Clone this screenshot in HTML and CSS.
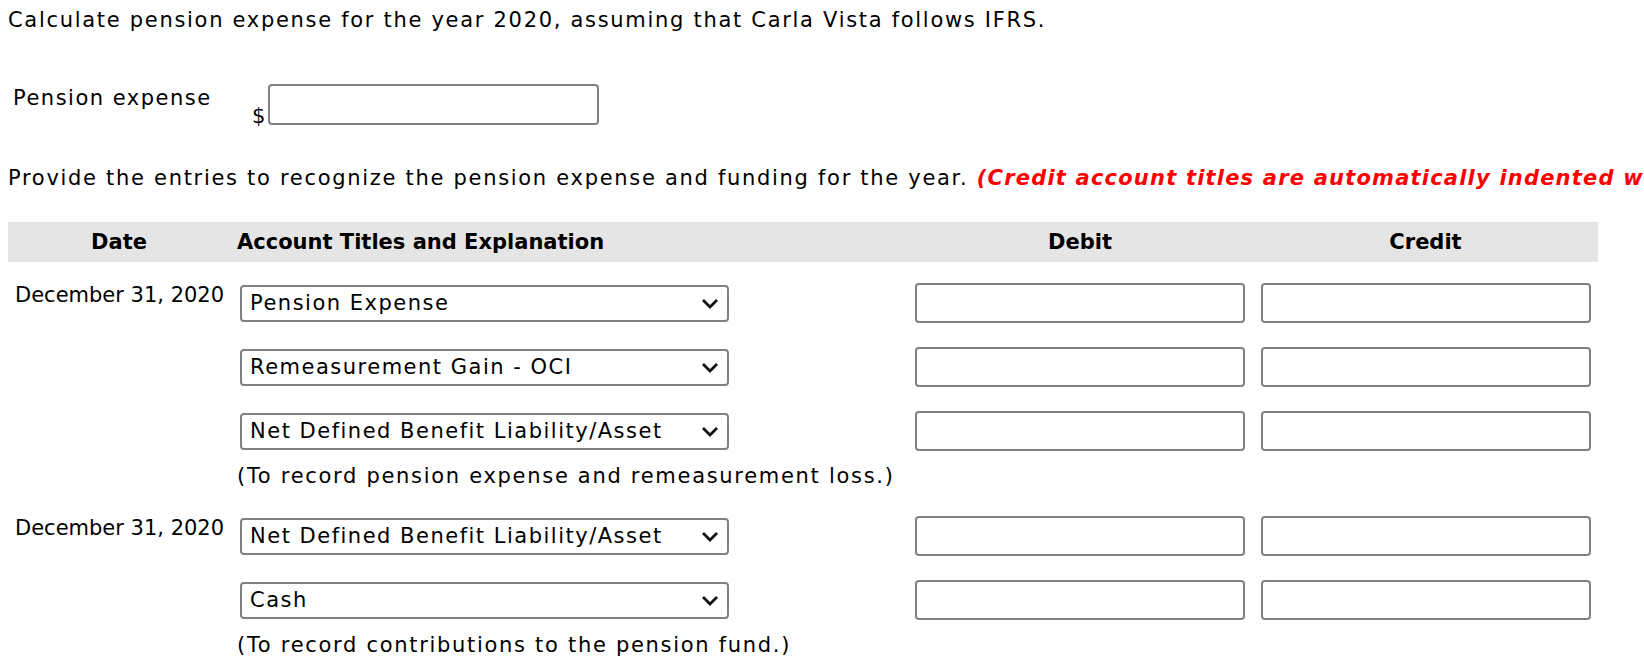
FILE: index.html
```html
<!DOCTYPE html>
<html lang="en">
<head>
    <meta charset="UTF-8">
    <meta name="viewport" content="width=device-width, initial-scale=1.0">
    <title>Pension Expense</title>
    <link rel="stylesheet" href="styles.css">
</head>
<body>
    <p class="question">Calculate pension expense for the year 2020, assuming that Carla Vista follows IFRS.</p>

    <div class="answer-row">
        <label class="answer-label" for="pension">Pension expense</label>
        <span class="currency">$</span>
        <input type="text" id="pension" class="answer-input">
    </div>

    <p class="instruction">Provide the entries to recognize the pension expense and funding for the year. <span class="warning">(Credit account titles are automatically indented when the amount is entered. Do not indent manually.)</span></p>

    <div class="journal">
        <div class="journal-head">
            <div class="col-date">Date</div>
            <div class="col-account">Account Titles and Explanation</div>
            <div class="col-amount">Debit</div>
            <div class="col-amount">Credit</div>
        </div>

        <div class="entry">
            <div class="line first">
                <div class="date">December 31, 2020</div>
                <div class="select-wrap">
                    <select class="account">
                        <option>Pension Expense</option>
                    </select>
                    <svg class="chevron" viewBox="0 0 18 11" width="18" height="11"><polyline points="2,2 9,9 16,2" fill="none" stroke="#111" stroke-width="2.8"/></svg>
                </div>
                <div class="amount"><input type="text"></div>
                <div class="amount"><input type="text"></div>
            </div>
            <div class="line">
                <div class="date"></div>
                <div class="select-wrap">
                    <select class="account">
                        <option>Remeasurement Gain - OCI</option>
                    </select>
                    <svg class="chevron" viewBox="0 0 18 11" width="18" height="11"><polyline points="2,2 9,9 16,2" fill="none" stroke="#111" stroke-width="2.8"/></svg>
                </div>
                <div class="amount"><input type="text"></div>
                <div class="amount"><input type="text"></div>
            </div>
            <div class="line">
                <div class="date"></div>
                <div class="select-wrap">
                    <select class="account">
                        <option>Net Defined Benefit Liability/Asset</option>
                    </select>
                    <svg class="chevron" viewBox="0 0 18 11" width="18" height="11"><polyline points="2,2 9,9 16,2" fill="none" stroke="#111" stroke-width="2.8"/></svg>
                </div>
                <div class="amount"><input type="text"></div>
                <div class="amount"><input type="text"></div>
            </div>
            <p class="note">(To record pension expense and remeasurement loss.)</p>
        </div>

        <div class="entry">
            <div class="line">
                <div class="date">December 31, 2020</div>
                <div class="select-wrap">
                    <select class="account">
                        <option>Net Defined Benefit Liability/Asset</option>
                    </select>
                    <svg class="chevron" viewBox="0 0 18 11" width="18" height="11"><polyline points="2,2 9,9 16,2" fill="none" stroke="#111" stroke-width="2.8"/></svg>
                </div>
                <div class="amount"><input type="text"></div>
                <div class="amount"><input type="text"></div>
            </div>
            <div class="line">
                <div class="date"></div>
                <div class="select-wrap">
                    <select class="account">
                        <option>Cash</option>
                    </select>
                    <svg class="chevron" viewBox="0 0 18 11" width="18" height="11"><polyline points="2,2 9,9 16,2" fill="none" stroke="#111" stroke-width="2.8"/></svg>
                </div>
                <div class="amount"><input type="text"></div>
                <div class="amount"><input type="text"></div>
            </div>
            <p class="note">(To record contributions to the pension fund.)</p>
        </div>
    </div>
</body>
</html>
```

FILE: styles.css
```css
html {
    overflow: hidden;
}
body {
    font-family: "DejaVu Sans", Verdana, sans-serif;
    font-size: 21px;
    line-height: 24px;
    letter-spacing: 1.7px;
    color: #000;
    margin: 0;
    padding: 8px;
    background-color: #fff;
}
.question {
    margin: 0;
}
.answer-row {
    display: flex;
    margin-top: 52px;
    height: 41px;
}
.answer-label {
    width: 239px;
    padding-left: 5px;
    padding-top: 2px;
    letter-spacing: 1.5px;
}
.currency {
    align-self: flex-end;
    margin-bottom: -3px;
    width: 16px;
    letter-spacing: 0;
}
.answer-input {
    width: 331px;
    height: 41px;
    box-sizing: border-box;
    border: 2px solid #808080;
    border-radius: 4px;
    margin: 0;
}
.instruction {
    margin: 41px 0 0;
    white-space: nowrap;
}
.warning {
    color: #ff0000;
    font-weight: bold;
    font-style: italic;
    letter-spacing: 1.2px;
}
.journal {
    width: 1590px;
    margin-top: 32px;
}
.journal-head, .line {
    display: grid;
    grid-template-columns: 222px 677px 346px 345px;
}
.journal-head {
    height: 40px;
    align-items: center;
    background-color: #e5e5e5;
    font-weight: bold;
    letter-spacing: 0;
}
.col-date, .col-amount {
    text-align: center;
}
.col-account {
    padding-left: 7px;
}
.entry {
    display: flow-root;
}
.line {
    height: 40px;
    margin-top: 24px;
    align-items: center;
}
.line.first {
    margin-top: 21px;
}
.date {
    align-self: start;
    padding-left: 7px;
    letter-spacing: 0;
    white-space: nowrap;
}
.select-wrap {
    position: relative;
    margin-left: 10px;
    width: 489px;
    height: 37px;
}
.account {
    appearance: none;
    -webkit-appearance: none;
    width: 100%;
    height: 37px;
    box-sizing: border-box;
    border: 2px solid #808080;
    border-radius: 4px;
    background-color: #fff;
    padding: 0 0 0 8px;
    font-family: "DejaVu Sans", Verdana, sans-serif;
    font-size: 21px;
    letter-spacing: 1.5px;
    color: #000;
    margin: 0;
}
.chevron {
    position: absolute;
    right: 10px;
    top: 13px;
    pointer-events: none;
}
.amount {
    padding-left: 8px;
}
.amount input {
    width: 330px;
    height: 40px;
    box-sizing: border-box;
    border: 2px solid #808080;
    border-radius: 4px;
    margin: 0;
}
.note {
    margin: 13px 0 4px;
    padding-left: 229px;
    white-space: nowrap;
}
```
